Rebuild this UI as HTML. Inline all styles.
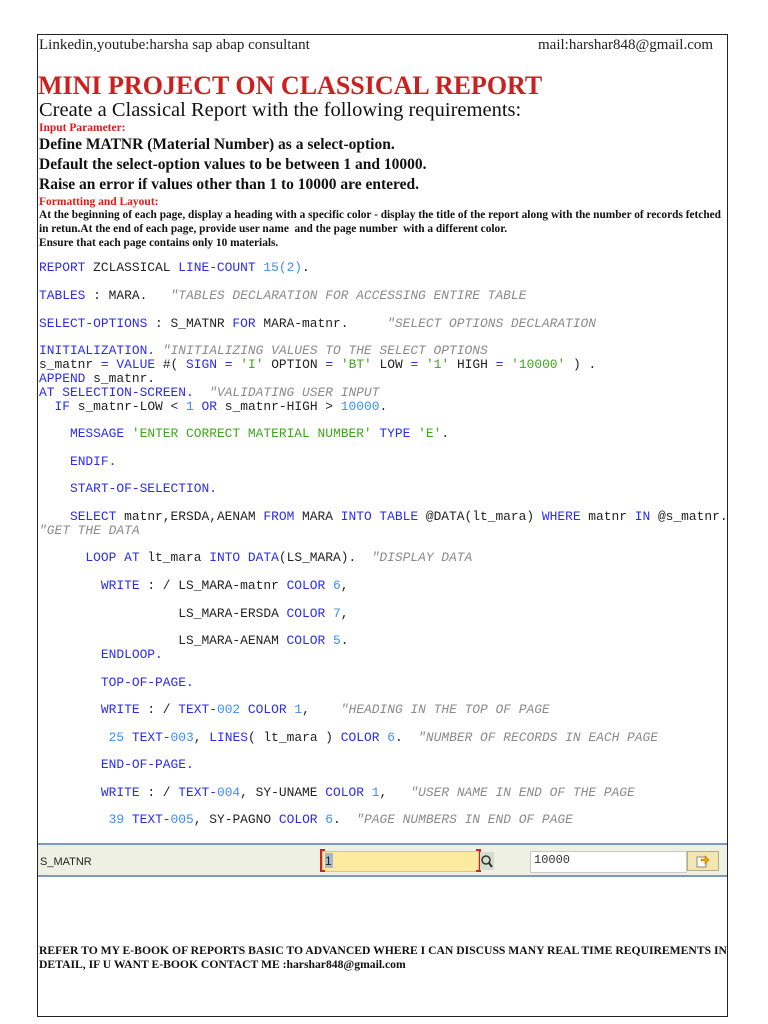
<!DOCTYPE html>
<html><head><meta charset="utf-8"><style>
html,body{margin:0;padding:0;background:#fff;width:768px;height:1024px;overflow:hidden}
#box{position:absolute;left:37px;top:34px;width:689px;height:981px;border:1px solid #222}
.a{position:absolute;white-space:pre;line-height:16px}
.s{font-family:"Liberation Serif",serif}
.m{font-family:"Liberation Mono",monospace;font-size:12.9px;color:#222;left:39px}
.k{color:#2b2bf0}.c{color:#8a8a8a;font-style:italic}.g{color:#3fa61c}.n{color:#3b8ff5}
.b{font-weight:bold;color:#111}
</style></head><body>
<div id="box"></div>
<div class="a s" style="left:39px;top:37px;font-size:15px;color:#222">Linkedin,youtube:harsha sap abap consultant</div>
<div class="a s" style="left:538px;top:37px;font-size:15px;color:#222">mail:harshar848@gmail.com</div>
<div class="a s" style="left:38px;top:72px;font-size:26px;line-height:28px;font-weight:bold;color:#cc1f1f">MINI PROJECT ON CLASSICAL REPORT</div>
<div class="a s" style="left:39px;top:98px;font-size:20.5px;line-height:24px;color:#111">Create a Classical Report with the following requirements:</div>
<div class="a s" style="left:39px;top:120px;font-size:11.5px;color:#e01b1b;font-weight:bold">Input Parameter:</div>
<div class="a s b" style="left:39px;top:137px;font-size:15.5px">Define MATNR (Material Number) as a select-option.</div>
<div class="a s b" style="left:39px;top:157px;font-size:15.5px">Default the select-option values to be between 1 and 10000.</div>
<div class="a s b" style="left:39px;top:177px;font-size:15.5px">Raise an error if values other than 1 to 10000 are entered.</div>
<div class="a s" style="left:39px;top:194px;font-size:11.5px;color:#e01b1b;font-weight:bold">Formatting and Layout:</div>
<div class="a s b" style="left:39px;top:208px;font-size:11.35px;line-height:14px">At the beginning of each page, display a heading with a specific color - display the title of the report along with the number of records fetched
in retun.At the end of each page, provide user name  and the page number  with a different color.
Ensure that each page contains only 10 materials.</div>

<div class="a m" style="top:260px"><span class="k">REPORT</span> ZCLASSICAL <span class="k">LINE-COUNT</span> <span class="n">15(2)</span>.</div>
<div class="a m" style="top:288px"><span class="k">TABLES</span> : MARA.   <span class="c">"TABLES DECLARATION FOR ACCESSING ENTIRE TABLE</span></div>
<div class="a m" style="top:316px"><span class="k">SELECT-OPTIONS</span> : S_MATNR <span class="k">FOR</span> MARA-matnr.     <span class="c">"SELECT OPTIONS DECLARATION</span></div>
<div class="a m" style="top:343px"><span class="k">INITIALIZATION.</span> <span class="c">"INITIALIZING VALUES TO THE SELECT OPTIONS</span></div>
<div class="a m" style="top:357px">s_matnr <span class="k">=</span> <span class="k">VALUE</span> #( <span class="k">SIGN</span> <span class="k">=</span> <span class="g">'I'</span> OPTION <span class="k">=</span> <span class="g">'BT'</span> LOW <span class="k">=</span> <span class="g">'1'</span> HIGH <span class="k">=</span> <span class="g">'10000'</span> ) .</div>
<div class="a m" style="top:371px"><span class="k">APPEND</span> s_matnr.</div>
<div class="a m" style="top:385px"><span class="k">AT SELECTION-SCREEN.</span>  <span class="c">"VALIDATING USER INPUT</span></div>
<div class="a m" style="top:399px">  <span class="k">IF</span> s_matnr-LOW &lt; <span class="n">1</span> <span class="k">OR</span> s_matnr-HIGH &gt; <span class="n">10000</span>.</div>
<div class="a m" style="top:426px">    <span class="k">MESSAGE</span> <span class="g">'ENTER CORRECT MATERIAL NUMBER'</span> <span class="k">TYPE</span> <span class="g">'E'</span>.</div>
<div class="a m" style="top:454px">    <span class="k">ENDIF.</span></div>
<div class="a m" style="top:481px">    <span class="k">START-OF-SELECTION.</span></div>
<div class="a m" style="top:509px">    <span class="k">SELECT</span> matnr,ERSDA,AENAM <span class="k">FROM</span> MARA <span class="k">INTO TABLE</span> @DATA(lt_mara) <span class="k">WHERE</span> matnr <span class="k">IN</span> @s_matnr.</div>
<div class="a m" style="top:523px"><span class="c">"GET THE DATA</span></div>
<div class="a m" style="top:550px">      <span class="k">LOOP AT</span> lt_mara <span class="k">INTO</span> <span class="k">DATA</span>(LS_MARA).  <span class="c">"DISPLAY DATA</span></div>
<div class="a m" style="top:578px">        <span class="k">WRITE</span> : / LS_MARA-matnr <span class="k">COLOR</span> <span class="n">6</span>,</div>
<div class="a m" style="top:606px">                  LS_MARA-ERSDA <span class="k">COLOR</span> <span class="n">7</span>,</div>
<div class="a m" style="top:633px">                  LS_MARA-AENAM <span class="k">COLOR</span> <span class="n">5</span>.</div>
<div class="a m" style="top:647px">        <span class="k">ENDLOOP.</span></div>
<div class="a m" style="top:675px">        <span class="k">TOP-OF-PAGE.</span></div>
<div class="a m" style="top:702px">        <span class="k">WRITE</span> : / <span class="k">TEXT-</span><span class="n">002</span> <span class="k">COLOR</span> <span class="n">1</span>,    <span class="c">"HEADING IN THE TOP OF PAGE</span></div>
<div class="a m" style="top:730px">         <span class="n">25</span> <span class="k">TEXT-</span><span class="n">003</span>, <span class="k">LINES</span>( lt_mara ) <span class="k">COLOR</span> <span class="n">6</span>.  <span class="c">"NUMBER OF RECORDS IN EACH PAGE</span></div>
<div class="a m" style="top:757px">        <span class="k">END-OF-PAGE.</span></div>
<div class="a m" style="top:785px">        <span class="k">WRITE</span> : / <span class="k">TEXT-</span><span class="n">004</span>, SY-UNAME <span class="k">COLOR</span> <span class="n">1</span>,   <span class="c">"USER NAME IN END OF THE PAGE</span></div>
<div class="a m" style="top:812px">         <span class="n">39</span> <span class="k">TEXT-</span><span class="n">005</span>, SY-PAGNO <span class="k">COLOR</span> <span class="n">6</span>.  <span class="c">"PAGE NUMBERS IN END OF PAGE</span></div>

<div style="position:absolute;left:38px;top:843px;width:689px;height:34px;background:#eef0e4;border-top:2px solid #7a98c0;border-bottom:2px solid #7a98c0;box-sizing:border-box"></div>
<div class="a" style="left:40px;top:854px;font-family:'Liberation Sans',sans-serif;font-size:11px;color:#222">S_MATNR</div>
<div style="position:absolute;left:322px;top:851px;width:155px;height:19px;background:#fbeaa0;border:1px solid #d6c680"></div>
<div style="position:absolute;left:320px;top:849px;width:5px;height:23px;border:2px solid #c0282a;border-right:none;box-sizing:border-box"></div>
<div style="position:absolute;left:476px;top:849px;width:5px;height:23px;border:2px solid #c0282a;border-left:none;box-sizing:border-box"></div>
<div style="position:absolute;left:325px;top:853px;width:8px;height:15px;background:#a8b8d0"></div>
<div class="a" style="left:325px;top:853px;font-family:'Liberation Sans',sans-serif;font-size:12px;color:#222">1</div>
<div style="position:absolute;left:480px;top:852px;width:14px;height:18px;background:#d8dcd0"></div>
<svg style="position:absolute;left:480px;top:853px" width="14" height="16" viewBox="0 0 14 16"><circle cx="6" cy="7" r="4" fill="none" stroke="#333" stroke-width="1.5"/><path d="M9 10 L12 14" stroke="#333" stroke-width="2"/></svg>
<div style="position:absolute;left:530px;top:851px;width:155px;height:20px;background:#fff;border:1px solid #c8c8c8"></div>
<div class="a" style="left:534px;top:852px;font-family:'Liberation Mono',monospace;font-size:12px;color:#333">10000</div>
<div style="position:absolute;left:687px;top:851px;width:32px;height:20px;background:#f2e7b0;border:1px solid #b8ad80;box-sizing:border-box"></div>
<svg style="position:absolute;left:696px;top:853px" width="14" height="15" viewBox="0 0 14 15"><rect x="1" y="4" width="9" height="10" fill="#fff" stroke="#888"/><path d="M5 6 H9 V3 L13 7 L9 11 V8 H5 Z" fill="#e8a800" stroke="#b07800" stroke-width="0.6"/></svg>

<div class="a s b" style="left:39px;top:944px;font-size:11.65px;line-height:14px">REFER TO MY E-BOOK OF REPORTS BASIC TO ADVANCED WHERE I CAN DISCUSS MANY REAL TIME REQUIREMENTS IN
DETAIL, IF U WANT E-BOOK CONTACT ME :harshar848@gmail.com</div>
</body></html>
